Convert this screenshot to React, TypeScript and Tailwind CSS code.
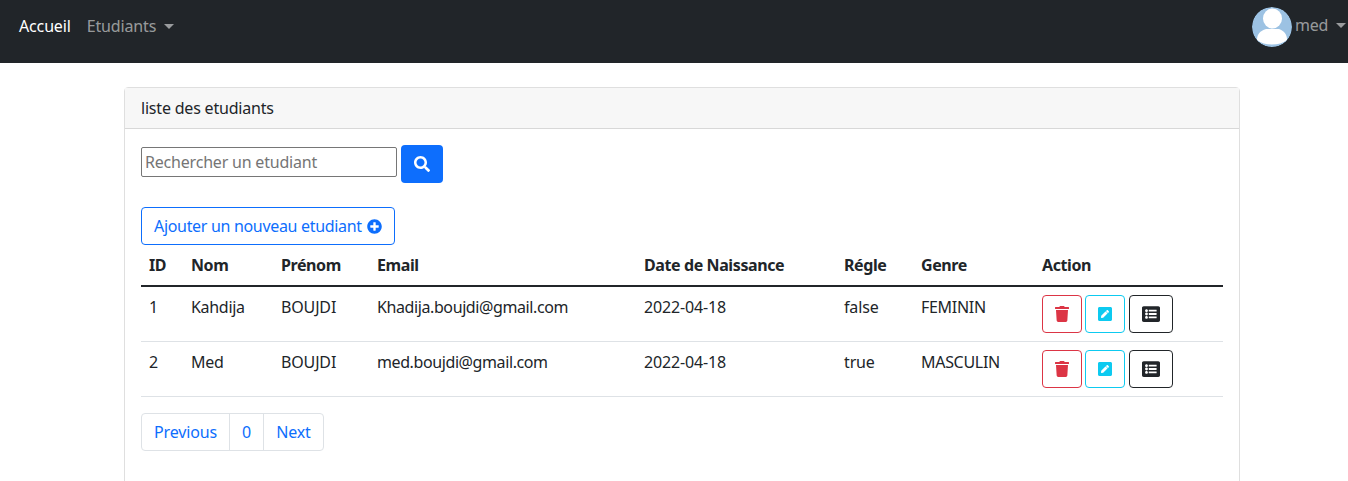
import { FaListAlt, FaPenSquare, FaPlusCircle, FaSearch, FaTrash } from "react-icons/fa"

const students = [
  { id: 1, nom: "Kahdija", prenom: "BOUJDI", email: "Khadija.boujdi@gmail.com", date: "2022-04-18", regle: "false", genre: "FEMININ" },
  { id: 2, nom: "Med", prenom: "BOUJDI", email: "med.boujdi@gmail.com", date: "2022-04-18", regle: "true", genre: "MASCULIN" },
]

const headers = [
  { label: "ID", width: "w-[42px]" },
  { label: "Nom", width: "w-[90px]" },
  { label: "Prénom", width: "w-[96px]" },
  { label: "Email", width: "w-[267px]" },
  { label: "Date de Naissance", width: "w-[200px]" },
  { label: "Régle", width: "w-[77px]" },
  { label: "Genre", width: "w-[121px]" },
  { label: "Action", width: "w-[189px]" },
]

function Caret() {
  return <span className="ml-[8px] inline-block border-x-[5px] border-t-[5px] border-x-transparent border-t-current align-[3px]" />
}

function Avatar() {
  return (
    <svg viewBox="0 0 40 40" className="h-10 w-10 rounded-full">
      <circle cx="20" cy="20" r="20" fill="#9cc2e3" />
      <ellipse cx="20.500" cy="11.500" rx="9.500" ry="10" fill="#fff" />
      <path d="M5 33c0-6 3-9 9-11h13c5 2 8 5 8 11-4 3-9 4.500-15 4.500s-11-1.500-15-4.500z" fill="#fff" />
    </svg>
  )
}

export default function App() {
  return (
    <div className="h-[481px] overflow-hidden bg-white font-['Noto_Sans',sans-serif] text-[16px] leading-6 tracking-[-0.15px] text-[#212529]">
      <nav className="flex h-[63px] items-start justify-between bg-[#212529] pl-[19px] pt-[7px]">
        <div className="flex gap-4 pt-[7px]">
          <a className="text-white">Accueil</a>
          <a className="text-[#ffffff8c]">
            Etudiants
            <Caret />
          </a>
        </div>
        <div className="flex items-start text-[#ffffff8c]">
          <Avatar />
          <span className="ml-[3px] whitespace-nowrap pr-[2px] pt-[6px] tracking-[-0.3px]">
            med
            <Caret />
          </span>
        </div>
      </nav>

      <div className="ml-[124px] mr-[108px] mt-[24px] h-[500px] rounded-[4px] border border-[#00000020]">
        <div className="h-[41px] border-b border-[#00000020] bg-[#f7f7f7] px-4 py-[8px] tracking-[-0.2px]">liste des etudiants</div>
        <div className="p-4">
          <div className="flex items-start gap-[4px]">
            <input
              placeholder="Rechercher un etudiant"
              className="mt-[2px] h-[30px] w-[256px] rounded-[2px] border border-[#767676] px-[3px] tracking-[-0.2px] placeholder:text-[#757575]"
            />
            <button className="flex h-[38px] w-[42px] items-center justify-center rounded-[4px] bg-[#0d6efd] text-white">
              <FaSearch className="h-4 w-4" />
            </button>
          </div>

          <button className="mt-[24px] flex h-[38px] w-[254px] items-center gap-[5px] whitespace-nowrap rounded-[4px] border border-[#0d6efd] px-3 tracking-[-0.32px] text-[#0d6efd]">
            Ajouter un nouveau etudiant
            <FaPlusCircle className="h-[15px] w-[15px] shrink-0" />
          </button>

          <table className="w-[1082px] table-fixed border-collapse">
            <thead>
              <tr className="h-[41px] border-b-2 border-[#212529]">
                {headers.map((h) => (
                  <th key={h.label} className={`${h.width} px-2 text-left font-bold tracking-[-0.4px]`}>
                    {h.label}
                  </th>
                ))}
              </tr>
            </thead>
            <tbody>
              {students.map((s) => (
                <tr key={s.id} className="h-[55px] border-b border-[#dee2e6] align-top">
                  <td className="px-2 py-2">{s.id}</td>
                  <td className="px-2 py-2 tracking-[-0.3px]">{s.nom}</td>
                  <td className="px-2 py-2">{s.prenom}</td>
                  <td className="px-2 py-2 tracking-[-0.4px]">{s.email}</td>
                  <td className="px-2 py-2">{s.date}</td>
                  <td className="px-2 py-2">{s.regle}</td>
                  <td className="px-2 py-2 tracking-[-0.3px]">{s.genre}</td>
                  <td className="px-2 py-2">
                    <div className="flex">
                      <button className="flex h-[38px] w-[40px] items-center justify-center rounded-[4px] border border-[#dc3545] text-[#dc3545]">
                        <FaTrash className="h-4 w-4" />
                      </button>
                      <button className="ml-[3px] flex h-[38px] w-[40px] items-center justify-center rounded-[4px] border border-[#0dcaf0] text-[#0dcaf0]">
                        <FaPenSquare className="h-4 w-4" />
                      </button>
                      <button className="ml-[4px] flex h-[38px] w-[44px] items-center justify-center rounded-[4px] border border-[#212529] text-[#212529]">
                        <FaListAlt className="h-[18px] w-[18px]" />
                      </button>
                    </div>
                  </td>
                </tr>
              ))}
            </tbody>
          </table>

          <ul className="mt-[16px] flex text-[#0d6efd]">
            <li className="flex h-[38px] w-[89px] items-center justify-center rounded-l-[4px] border border-[#dee2e6]">Previous</li>
            <li className="-ml-px flex h-[38px] w-[35px] items-center justify-center border border-[#dee2e6]">0</li>
            <li className="-ml-px flex h-[38px] w-[61px] items-center justify-center rounded-r-[4px] border border-[#dee2e6]">Next</li>
          </ul>
        </div>
      </div>
    </div>
  )
}
